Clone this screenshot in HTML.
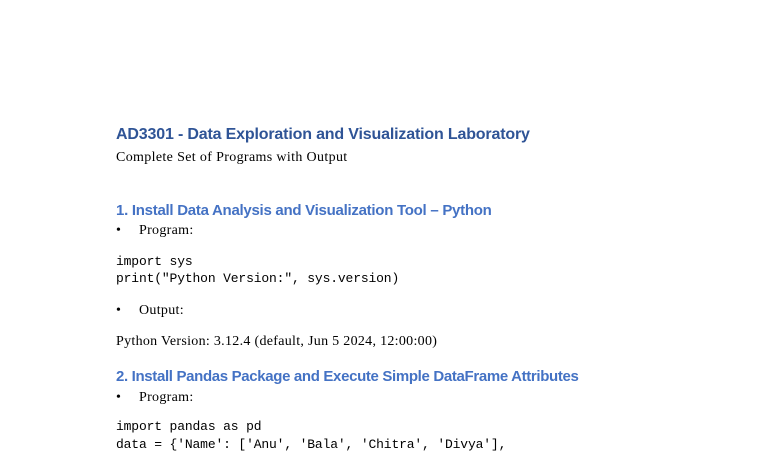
<!DOCTYPE html>
<html><head><style>
body{margin:0;width:784px;height:441px;overflow:hidden;background:#fff;position:relative;font-family:"Liberation Serif",serif;color:#000}
div{position:absolute;white-space:nowrap;line-height:1}
.t{left:116px;top:126px;font:bold 16px "Liberation Sans",sans-serif;color:#2f5496;letter-spacing:-0.17px}
.h{left:116px;font:bold 15px "Liberation Sans",sans-serif;color:#4472c4;letter-spacing:-0.27px}
.s{left:116px;font-size:14px;letter-spacing:0.35px}
.b{left:116px;font-size:14px;letter-spacing:0.3px}
.b span{position:absolute;left:23px}
.c{left:116px;font:13px "Liberation Mono",monospace;letter-spacing:-0.15px}
</style></head><body>
<div class="t">AD3301 - Data Exploration and Visualization Laboratory</div>
<div class="s" style="top:151px">Complete Set of Programs with Output</div>
<div class="h" style="top:202px">1. Install Data Analysis and Visualization Tool – Python</div>
<div class="b" style="top:224px">•<span>Program:</span></div>
<div class="c" style="top:254px">import sys</div>
<div class="c" style="top:271px">print("Python Version:", sys.version)</div>
<div class="b" style="top:304px">•<span>Output:</span></div>
<div class="s" style="top:335px;letter-spacing:0.3px">Python Version: 3.12.4 (default, Jun 5 2024, 12:00:00)</div>
<div class="h" style="top:368px;letter-spacing:-0.34px">2. Install Pandas Package and Execute Simple DataFrame Attributes</div>
<div class="b" style="top:391px">•<span>Program:</span></div>
<div class="c" style="top:419px">import pandas as pd</div>
<div class="c" style="top:437px">data = {'Name': ['Anu', 'Bala', 'Chitra', 'Divya'],</div>
</body></html>
